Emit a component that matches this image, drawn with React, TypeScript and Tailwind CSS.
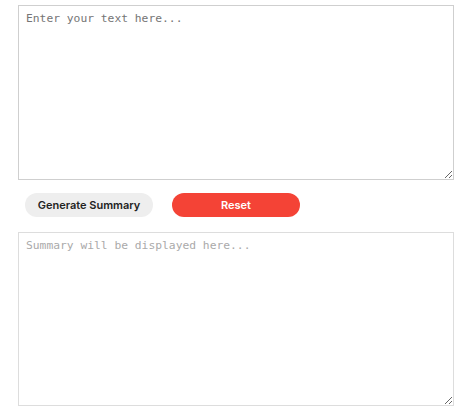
export default function App() {
  return (
    <div className="w-[474px] h-[413px] bg-white pl-[18px] pr-[20px] pt-[5px]">
      <textarea
        placeholder="Enter your text here..."
        className="block w-full h-[175px] border border-[#cfcfcf] bg-white px-[7px] py-[5px] font-['DejaVu_Sans_Mono',monospace] text-[11.3px] leading-[16px] text-[#333] placeholder:text-[#757575] outline-none resize-y"
      />
      <div className="flex items-center gap-[19px] pl-[7px] mt-[13px] font-['Inter',sans-serif]">
        <button className="w-[128px] h-[24px] rounded-full bg-[#eeeeee] text-[11px] font-semibold text-[#222]">
          Generate Summary
        </button>
        <button className="w-[128px] h-[24px] rounded-full bg-[#f44336] text-[11px] font-semibold text-white">
          Reset
        </button>
      </div>
      <textarea
        placeholder="Summary will be displayed here..."
        readOnly
        className="block w-full h-[174px] mt-[15px] border border-[#dddddd] bg-white px-[7px] py-[5px] font-['DejaVu_Sans_Mono',monospace] text-[11.3px] leading-[16px] text-[#333] placeholder:text-[#aaaaaa] outline-none resize-y"
      />
    </div>
  );
}
